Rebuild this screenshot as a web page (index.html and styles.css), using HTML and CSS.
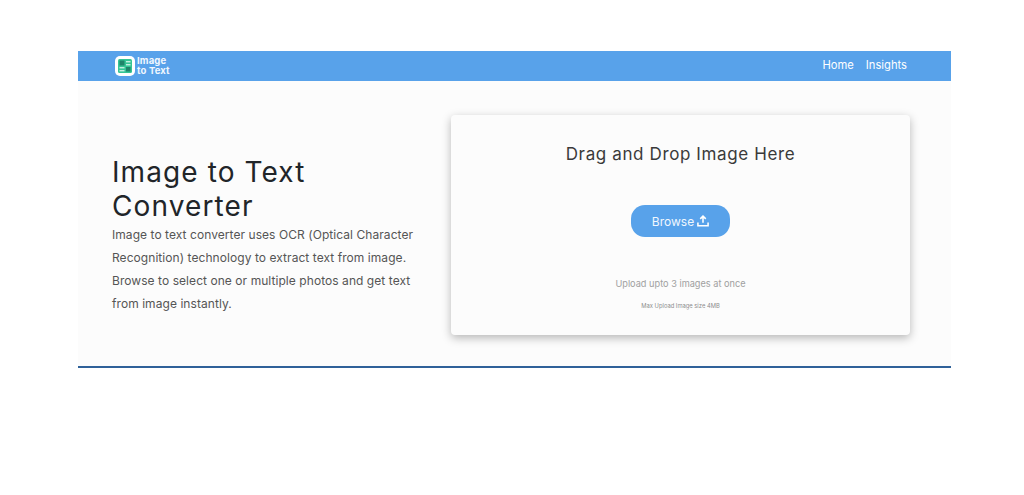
FILE: index.html
```html
<!DOCTYPE html>
<html lang="en">
<head>
    <meta charset="UTF-8">
    <meta name="viewport" content="width=device-width, initial-scale=1.0">
    <title>Image to Text</title>
    <link rel="stylesheet" href="styles.css">
</head>
<body>
    <div class="page">
        <header class="navbar">
            <a class="brand" href="#">
                <span class="brand-icon">
                    <svg width="14" height="14" viewBox="0 0 14 14">
                        <rect x="0" y="0" width="14" height="14" rx="1.5" fill="#35c595"/>
                        <rect x="1.5" y="1.5" width="5" height="5" fill="#1f8468"/>
                        <rect x="8" y="2" width="4.5" height="1.4" fill="#c5efdf"/>
                        <rect x="8" y="5" width="4.5" height="1.4" fill="#c5efdf"/>
                        <rect x="1.5" y="8" width="5" height="1.4" fill="#c5efdf"/>
                        <rect x="1.5" y="11" width="5" height="1.4" fill="#c5efdf"/>
                        <rect x="8" y="8" width="4.5" height="4.5" fill="#1f8468"/>
                    </svg>
                </span>
                <span class="brand-text">Image<br>to Text</span>
            </a>
            <nav class="nav-links">
                <a href="#">Home</a>
                <a href="#">Insights</a>
            </nav>
        </header>

        <main class="hero">
            <section class="intro">
                <h1>Image to Text Converter</h1>
                <p>Image to text converter uses OCR (Optical Character Recognition) technology to extract text from image. Browse to select one or multiple photos and get text from image instantly.</p>
            </section>

            <section class="upload-card">
                <h2>Drag and Drop Image Here</h2>
                <button class="browse-button">
                    Browse
                    <svg width="12" height="12" viewBox="0 0 13 13" fill="none" stroke="#fff" stroke-width="1.7">
                        <path d="M6.5 8.5V1.5M3.5 4.2l3-3 3 3"/>
                        <path d="M1 8v3.6h11V8"/>
                    </svg>
                </button>
                <p class="upload-limit">Upload upto 3 images at once</p>
                <p class="upload-size">Max Upload Image size 4MB</p>
            </section>
        </main>
    </div>
</body>
</html>
```
FILE: styles.css
```css
* {
	box-sizing: border-box;
}

body {
	margin: 0;
	background-color: #fff;
	font-family: "Inter", "Liberation Sans", sans-serif;
}

.page {
	width: 873px;
	margin: 51px 0 0 78px;
	background-color: #fcfcfc;
	border-bottom: 2px solid #2f6199;
}

.navbar {
	height: 30px;
	background-color: #58a2ea;
	display: flex;
	justify-content: space-between;
	align-items: center;
	padding: 0 44px 2px 37px;
}

.brand {
	display: flex;
	align-items: center;
	gap: 2px;
	margin-top: 2px;
	color: #fff;
	text-decoration: none;
}

.brand-icon {
	width: 20px;
	height: 20px;
	background-color: #fff;
	border-radius: 5px;
	display: flex;
	justify-content: center;
	align-items: center;
}

.brand-text {
	font-size: 9.5px;
	font-weight: 700;
	line-height: 10px;
	letter-spacing: 0.15px;
	color: #f0f7fe;
}

.nav-links {
	display: flex;
	gap: 12px;
}

.nav-links a {
	color: #fff;
	font-size: 11.2px;
	text-decoration: none;
}

.hero {
	height: 285px;
	display: flex;
	justify-content: space-between;
	padding: 34px 41px 0 34px;
}

.intro {
	width: 310px;
	padding-top: 40px;
}

.intro h1 {
	margin: 0;
	font-size: 28px;
	font-weight: 400;
	line-height: 34px;
	letter-spacing: 1.1px;
	color: #212529;
}

.intro p {
	margin: 0;
	font-size: 12px;
	line-height: 23px;
	letter-spacing: 0.06px;
	color: #555;
}

.upload-card {
	width: 459px;
	height: 220px;
	background-color: #fcfcfc;
	border-radius: 4px;
	box-shadow: 0 3px 10px rgba(0, 0, 0, 0.28);
	display: flex;
	flex-direction: column;
	align-items: center;
	padding-top: 29px;
}

.upload-card h2 {
	margin: 0;
	font-size: 17px;
	font-weight: 400;
	line-height: 20px;
	letter-spacing: 0.62px;
	color: #3a3a3a;
}

.browse-button {
	width: 99px;
	height: 32px;
	margin-top: 41px;
	background-color: #58a2ea;
	border: none;
	border-radius: 14px;
	color: #f0f7fe;
	font-family: inherit;
	font-size: 12px;
	display: flex;
	justify-content: center;
	align-items: center;
	gap: 3px;
}

.upload-limit {
	margin: 40px 0 0;
	font-size: 9.2px;
	line-height: 14px;
	color: #a0a0a0;
}

.upload-size {
	margin: 11px 0 0;
	font-size: 5.8px;
	line-height: 8px;
	color: #8c8c8c;
}
```
